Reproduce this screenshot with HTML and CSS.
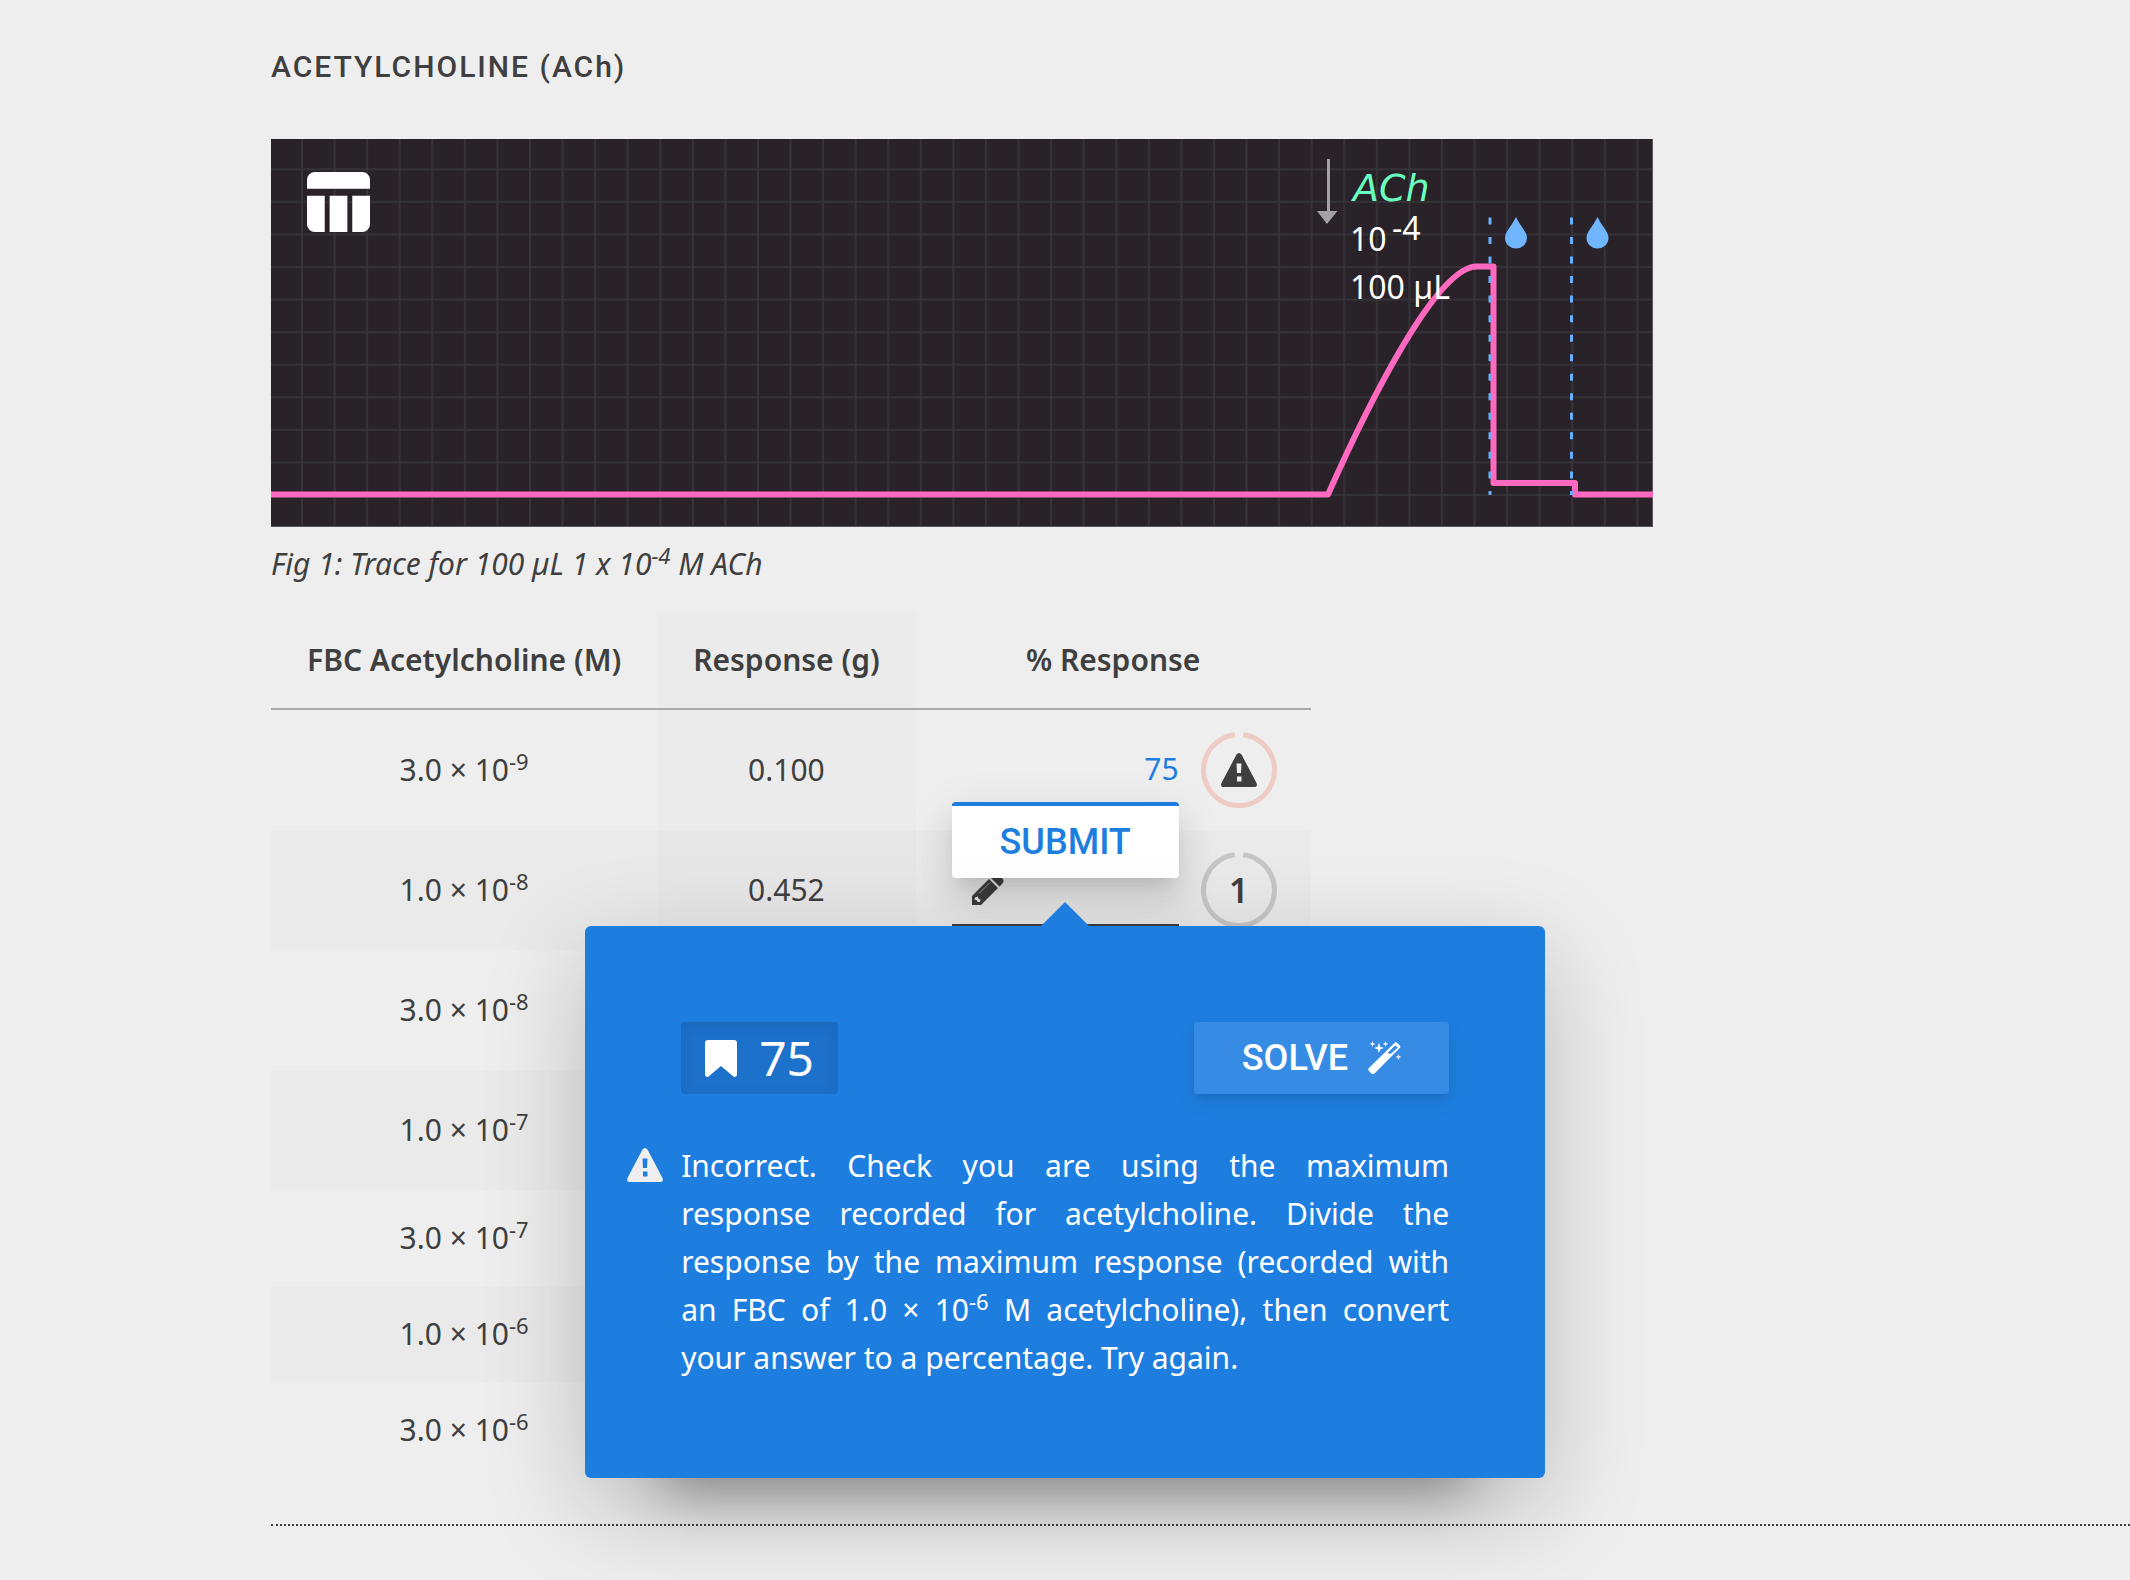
FILE: index.html
```html
<!DOCTYPE html>
<html lang="en">
<head>
    <meta charset="UTF-8">
    <meta name="viewport" content="width=device-width, initial-scale=1.0">
    <title>Acetylcholine (ACh)</title>
    <link rel="stylesheet" href="styles.css">
</head>
<body>

    <main class="page">
        <h2>ACETYLCHOLINE (ACh)</h2>

        <figure>
            <div class="trace">
                <svg class="trace-plot" viewBox="0 0 1382 388" role="img" aria-label="Trace for acetylcholine">
                    <defs>
                        <pattern id="grid" x="30" y="29.3" width="32.57" height="32.57" patternUnits="userSpaceOnUse">
                            <path d="M0 1H32.57M1 0V32.57" stroke="#38363b" stroke-width="1.6"/>
                        </pattern>
                    </defs>
                    <rect width="1382" height="388" fill="#292329"/>
                    <rect width="1382" height="388" fill="url(#grid)"/>
                    <path d="M0 387.5H1381.5V0" fill="none" stroke="#5b565c"/>

                    <path class="signal" d="M0 355.5H1057C1095 270 1165 127 1206 127.500H1222.5V344H1304V355.5H1382"/>

                    <path class="wash-line" d="M1219 78.5V356M1300.5 78.5V356"/>
                    <path class="drop" d="M1245 78C1250 88 1256 93 1256 99A11 10.5 0 0 1 1234 99C1234 93 1240 88 1245 78Z"/>
                    <path class="drop" d="M1326.5 78C1331.5 88 1337.5 93 1337.5 99A11 10.5 0 0 1 1315.5 99C1315.5 93 1321.5 88 1326.5 78Z"/>

                    <path class="arrow" d="M1056 20H1059V72H1066.5L1056 85L1046 72H1056Z"/>
                    <text class="drug" x="1082" y="62">ACh</text>
                    <text class="dose" x="1079" y="112">10</text>
                    <text class="dose" x="1121" y="101">-4</text>
                    <text class="dose" x="1079" y="160">100 µL</text>
                </svg>
                <button type="button" class="table-toggle" aria-label="Show table">
                    <svg viewBox="0 0 64 62">
                        <path d="M8 0H56A8 8 0 0 1 64 8V17H0V8A8 8 0 0 1 8 0ZM0 24H18V61H8A8 8 0 0 1 0 53ZM23 24H41V61H23ZM46 24H64V53A8 8 0 0 1 56 61H46Z"/>
                    </svg>
                </button>
            </div>
            <figcaption>Fig 1: Trace for 100 µL 1 x 10<sup>-4</sup> M ACh</figcaption>
        </figure>

        <table>
            <thead>
                <tr>
                    <th>FBC Acetylcholine (M)</th>
                    <th>Response (g)</th>
                    <th>% Response</th>
                </tr>
            </thead>
            <tbody>
                <tr>
                    <td>3.0 × 10<sup>-9</sup></td>
                    <td>0.100</td>
                    <td class="answer-cell">
                        <div class="answer">
                            <div class="field">
                                <input type="text" value="75" aria-label="% response for 3.0 × 10-9 M">
                                <button type="button" class="submit">SUBMIT</button>
                                <div class="feedback">
                                    <div class="feedback-top">
                                        <div class="last-answer">
                                            <svg viewBox="0 0 32 37"><path d="M3 0H29A3 3 0 0 1 32 3V34Q32 37 29 37L16 26L3 37Q0 37 0 34V3A3 3 0 0 1 3 0Z"/></svg>
                                            75
                                        </div>
                                        <button type="button" class="solve">
                                            SOLVE
                                            <svg viewBox="0 0 33 33"><path fill-rule="evenodd" d="M27 0.5Q28 0 29 0.7L32 3.7Q33 4.7 32 5.7L6.5 31.5Q5 33 3.5 31.5L0.7 28.7Q-0.5 27.5 0.7 26.3ZM27 3.5L19.5 11L22.500 12L30 5.5ZM11 0.5L12.3 4.7L16 6L12.3 7.300L11 11L9.700 7.300L6 6L9.700 4.700ZM4.500 -1L5.200 1.300L7.500 2L5.200 2.700L4.500 5L3.800 2.700L1.500 2L3.800 1.300ZM17.500 -1L18.200 1.300L20.500 2L18.200 2.700L17.500 5L16.800 2.700L14.500 2L16.800 1.300ZM30.500 12L31.200 14.300L33.500 15L31.200 15.700L30.500 18L29.800 15.700L27.500 15L29.800 14.300Z"/></svg>
                                        </button>
                                    </div>
                                    <div class="message">
                                        <svg class="warning" viewBox="0 0 36 34"><path fill-rule="evenodd" d="M15.5 1.5Q18 -1.5 20.5 1.5L35.5 30Q37 34 33 34H3Q-1 34 0.5 30ZM15.5 10.5L16 20H20L20.5 10.5ZM16 23.5V28.5H20.5V23.5Z"/></svg>
                                        <p>Incorrect. Check you are using the maximum response recorded for acetylcholine. Divide the response by the maximum response (recorded with an FBC of 1.0 × 10<sup>-6</sup> M acetylcholine), then convert your answer to a percentage. Try again.</p>
                                    </div>
                                </div>
                            </div>
                            <div class="badge wrong">
                                <svg class="ring" viewBox="0 0 76 76"><path d="M42.3 2.8A35.5 35.5 0 1 1 33.7 2.8"/></svg>
                                <svg class="warning" viewBox="0 0 36 34"><path fill-rule="evenodd" d="M15.5 1.5Q18 -1.5 20.5 1.5L35.5 30Q37 34 33 34H3Q-1 34 0.5 30ZM15.5 10.5L16 20H20L20.5 10.5ZM16 23.5V28.5H20.5V23.5Z"/></svg>
                            </div>
                        </div>
                    </td>
                </tr>
                <tr>
                    <td>1.0 × 10<sup>-8</sup></td>
                    <td>0.452</td>
                    <td class="answer-cell">
                        <div class="answer">
                            <div class="field">
                                <svg class="pencil" viewBox="0 0 32 32">
                                    <path fill-rule="evenodd" d="M0 23L17 6L26 15L9 32H0ZM3 24.500L2.500 27Q5 26 5.500 29L8 29L8.500 26.500Q6 26.500 6 23.500ZM18.5 4.5L21 2Q24 -1 27 2L30 5Q33 8 30 11L27.5 13.5Z"/>
                                    <path class="shine" d="M7 20.500L18 9.500"/>
                                </svg>
                                <input type="text" aria-label="% response for 1.0 × 10-8 M">
                            </div>
                            <div class="badge">
                                <svg class="ring" viewBox="0 0 76 76"><path d="M42.3 2.8A35.5 35.5 0 1 1 33.7 2.8"/></svg>
                                <span>1</span>
                            </div>
                        </div>
                    </td>
                </tr>
                <tr>
                    <td>3.0 × 10<sup>-8</sup></td>
                    <td></td>
                    <td class="answer-cell"><div class="answer"></div></td>
                </tr>
                <tr>
                    <td>1.0 × 10<sup>-7</sup></td>
                    <td></td>
                    <td class="answer-cell"><div class="answer"></div></td>
                </tr>
                <tr>
                    <td>3.0 × 10<sup>-7</sup></td>
                    <td></td>
                    <td></td>
                </tr>
                <tr>
                    <td>1.0 × 10<sup>-6</sup></td>
                    <td></td>
                    <td></td>
                </tr>
                <tr>
                    <td>3.0 × 10<sup>-6</sup></td>
                    <td></td>
                    <td></td>
                </tr>
            </tbody>
        </table>

        <hr>
    </main>

</body>
</html>
```
FILE: styles.css
```css
* {
    box-sizing: border-box;
}
body {
    margin: 0;
    font-family: 'Noto Sans', sans-serif;
    font-size: 30px;
    line-height: 48px;
    color: #3f3f3f;
    background-color: #eee;
}
.page {
    padding: 43px 0 54px 271px;
}
h2 {
    margin: 0 0 48px;
    font-family: Roboto, sans-serif;
    font-size: 30px;
    font-weight: 500;
    letter-spacing: 2px;
}
sup {
    font-size: 22px;
    line-height: 0;
    vertical-align: 11px;
}
button {
    padding: 0;
    border: none;
    cursor: pointer;
    font-family: Roboto, sans-serif;
    font-size: 36px;
    font-weight: 500;
}
svg {
    display: block;
    overflow: visible;
    fill: currentColor;
}

/* trace */
figure {
    margin: 0 0 24px;
}
.trace {
    position: relative;
    max-width: 1382px;
}
.trace-plot {
    width: 100%;
    overflow: hidden;
}
.signal {
    fill: none;
    stroke: #ff69bf;
    stroke-width: 6;
    stroke-linejoin: round;
}
.wash-line {
    fill: none;
    stroke: #66b0ff;
    stroke-width: 3;
    stroke-dasharray: 7 12.53;
}
.drop {
    fill: #70b5ff;
}
.arrow {
    fill: #a3a1a3;
}
.drug {
    font-family: 'DejaVu Sans', sans-serif;
    font-size: 38px;
    font-style: italic;
    fill: #69ffbe;
}
.dose {
    font-size: 32px;
    fill: #fff;
}
.table-toggle {
    position: absolute;
    top: 33px;
    left: 36px;
    width: 63px;
    color: #fff;
    background: none;
}
figcaption {
    margin-top: 13px;
    font-style: italic;
}

/* results table */
table {
    border-collapse: separate;
    border-spacing: 0;
    text-align: center;
}
th, td {
    padding: 24px 36px;
}
th {
    font-weight: 600;
    border-bottom: 2px solid #aaa;
}
th:nth-child(2), td:nth-child(2) {
    background-color: rgba(0,0,0,0.012);
}
tbody tr:nth-child(even) {
    background-color: rgba(0,0,0,0.015);
}
.answer {
    display: flex;
    gap: 24px;
    height: 72px;
}
.field {
    position: relative;
    display: flex;
    align-items: center;
    width: 227px;
    padding-left: 20px;
    border-bottom: 2px solid #3f3f3f;
}
.field input {
    flex: 1;
    min-width: 0;
    height: 48px;
    padding: 0;
    border: none;
    outline: none;
    font: inherit;
    color: #1e7edf;
    text-align: right;
    background: none;
}
.pencil {
    width: 32px;
}
.shine {
    fill: none;
    stroke: #aaa;
}
.badge {
    position: relative;
    display: flex;
    align-items: center;
    justify-content: center;
    width: 72px;
    font-size: 34px;
    font-weight: 600;
}
.ring {
    position: absolute;
    inset: -2px;
    fill: none;
    stroke: #c6c6c6;
    stroke-width: 5;
}
.wrong .ring {
    stroke: #eecbc5;
}
.warning {
    width: 36px;
}

/* submit button and feedback, laid over the rows below */
.submit {
    position: absolute;
    top: 68px;
    left: 0;
    z-index: 1;
    width: 100%;
    height: 76px;
    color: #1e7edf;
    background-color: #fff;
    border-top: 4px solid #1e7edf;
    border-radius: 4px;
    box-shadow: 0 14px 16px -8px rgba(0,0,0,0.1), 0 24px 34px 4px rgba(0,0,0,0.07), 0 10px 44px 8px rgba(0,0,0,0.06);
}
.feedback {
    position: absolute;
    top: 192px;
    left: 50%;
    z-index: 2;
    width: 960px;
    margin-left: -480px;
    padding: 96px;
    color: #fff;
    background-color: #1e7edf;
    border-radius: 6px;
    box-shadow: 0 96px 50px -80px rgba(0,0,0,0.3), 0 30px 100px rgba(0,0,0,0.22);
}
.feedback::before {
    content: '';
    position: absolute;
    bottom: 100%;
    left: 50%;
    margin-left: -24px;
    border: 24px solid transparent;
    border-top: none;
    border-bottom-color: #1e7edf;
}
.feedback-top {
    display: flex;
    justify-content: space-between;
    margin-bottom: 48px;
}
.last-answer {
    display: flex;
    align-items: center;
    gap: 22px;
    height: 72px;
    padding: 0 24px;
    font-size: 48px;
    background-color: #1c71ca;
    border-radius: 4px;
    box-shadow: inset 0 4px 16px rgba(0,0,0,0.08);
}
.last-answer svg {
    width: 32px;
}
.solve {
    display: flex;
    align-items: center;
    gap: 20px;
    height: 72px;
    padding: 0 48px;
    color: #fff;
    background-color: #368be4;
    border-radius: 4px;
    box-shadow: 0 4px 8px -2px rgba(0,0,0,0.1), 0 8px 20px rgba(0,0,0,0.08);
}
.solve svg {
    width: 33px;
}
.message {
    position: relative;
    text-align: justify;
}
.message p {
    margin: 0;
}
.message .warning {
    position: absolute;
    top: 6px;
    right: 100%;
    margin-right: 18px;
    color: #eee;
}
hr {
    margin: 46px 0 0;
    border: none;
    border-top: 2px dotted #3f3f3f;
}
```
